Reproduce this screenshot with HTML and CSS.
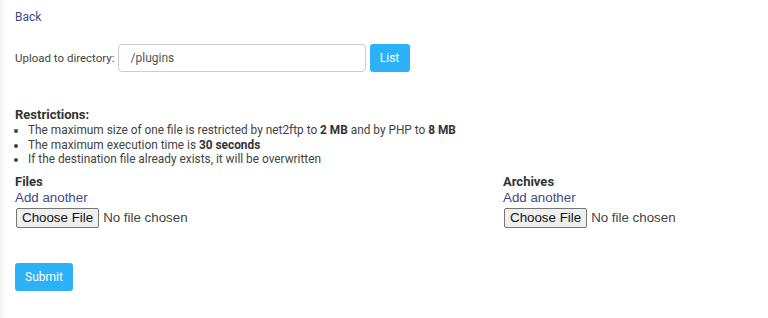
FILE: index.html
```html
<!DOCTYPE html>
<html>
<head>
<meta charset="utf-8">
<link rel="stylesheet" href="styles.css">
</head>
<body>
<div class="page">
  <a class="back" href="#">Back</a>
  <div class="dir-row">
    <label class="dir-label">Upload to directory:</label>
    <input class="dir-input" type="text" value="/plugins">
    <button class="btn btn-list" type="button">List</button>
  </div>
  <div class="restrictions">
    <div class="restr-title">Restrictions:</div>
    <ul class="restr-list">
      <li>The maximum size of one file is restricted by net2ftp to <b>2 MB</b> and by PHP to <b>8 MB</b></li>
      <li>The maximum execution time is <b>30 seconds</b></li>
      <li>If the destination file already exists, it will be overwritten</li>
    </ul>
  </div>
  <div class="uploads">
    <div class="col">
      <div class="col-title">Files</div>
      <a class="add" href="#">Add another</a>
      <div class="file-row"><span class="fbtn">Choose File</span><span class="fname">No file chosen</span></div>
    </div>
    <div class="col">
      <div class="col-title">Archives</div>
      <a class="add" href="#">Add another</a>
      <div class="file-row"><span class="fbtn">Choose File</span><span class="fname">No file chosen</span></div>
    </div>
  </div>
  <button class="btn btn-submit" type="button">Submit</button>
</div>
</body>
</html>
```

FILE: styles.css
```css
html, body {
  margin: 0;
  padding: 0;
  background: #f4f4f4;
}
body {
  font-family: Roboto, "Liberation Sans", Arial, sans-serif;
  font-size: 12px;
  color: #444;
}
.page {
  margin-left: 3px;
  background: #fff;
  min-height: 318px;
  padding: 10px 12px 0 12px;
  box-sizing: border-box;
}
.back {
  display: block;
  color: #424a7e;
  text-decoration: none;
  line-height: 15px;
  font-size: 12px;
}
.dir-row {
  display: flex;
  align-items: center;
  margin-top: 19px;
  height: 28px;
}
.dir-label {
  color: #444;
  font-size: 11.5px;
  margin-right: 3px;
}
.dir-input {
  width: 248px;
  height: 28px;
  box-sizing: border-box;
  border: 1px solid #ccc;
  border-radius: 4px;
  padding: 0 12px;
  font-family: Roboto, "Liberation Sans", Arial, sans-serif;
  font-size: 12px;
  color: #555;
  margin: 0;
  outline: none;
}
.btn {
  background: #2cb1f6;
  color: #fff;
  border: none;
  border-radius: 3px;
  font-family: Roboto, "Liberation Sans", Arial, sans-serif;
  font-size: 12px;
  font-weight: 400;
  cursor: pointer;
}
.btn-list {
  margin-left: 4px;
  width: 40px;
  height: 28px;
  padding: 0;
}
.restrictions {
  margin-top: 36px;
}
.restr-title {
  font-weight: bold;
  font-size: 13px;
  color: #333;
  line-height: 14px;
}
.restr-list {
  margin: 1px 0 0 0;
  padding-left: 13px;
  line-height: 14.5px;
  color: #444;
  font-size: 11.85px;
}
.restr-list b {
  color: #333;
}
.uploads {
  display: grid;
  grid-template-columns: 488px 1fr;
  margin-top: 7px;
}
.col-title {
  font-weight: bold;
  font-size: 13px;
  color: #333;
  line-height: 15px;
}
.add {
  display: block;
  font-family: "Liberation Sans", Arial, sans-serif;
  font-size: 13.333px;
  color: #424a7e;
  text-decoration: none;
  line-height: 16px;
  margin-top: 1px;
}
.file-row {
  display: flex;
  align-items: center;
  margin-top: 2px;
  margin-left: 1px;
  font-family: "Liberation Sans", Arial, sans-serif;
  font-size: 13.333px;
  color: #333;
}
.fbtn {
  display: inline-block;
  background: #efefef;
  border: 1px solid #767676;
  border-radius: 2px;
  padding: 0 5px;
  height: 20px;
  line-height: 18px;
  box-sizing: border-box;
  color: #111;
  margin-right: 4px;
}
.fname {
  color: #444;
}
.btn-submit {
  display: block;
  margin-top: 35px;
  width: 58px;
  height: 28px;
  padding: 0;
}
```
